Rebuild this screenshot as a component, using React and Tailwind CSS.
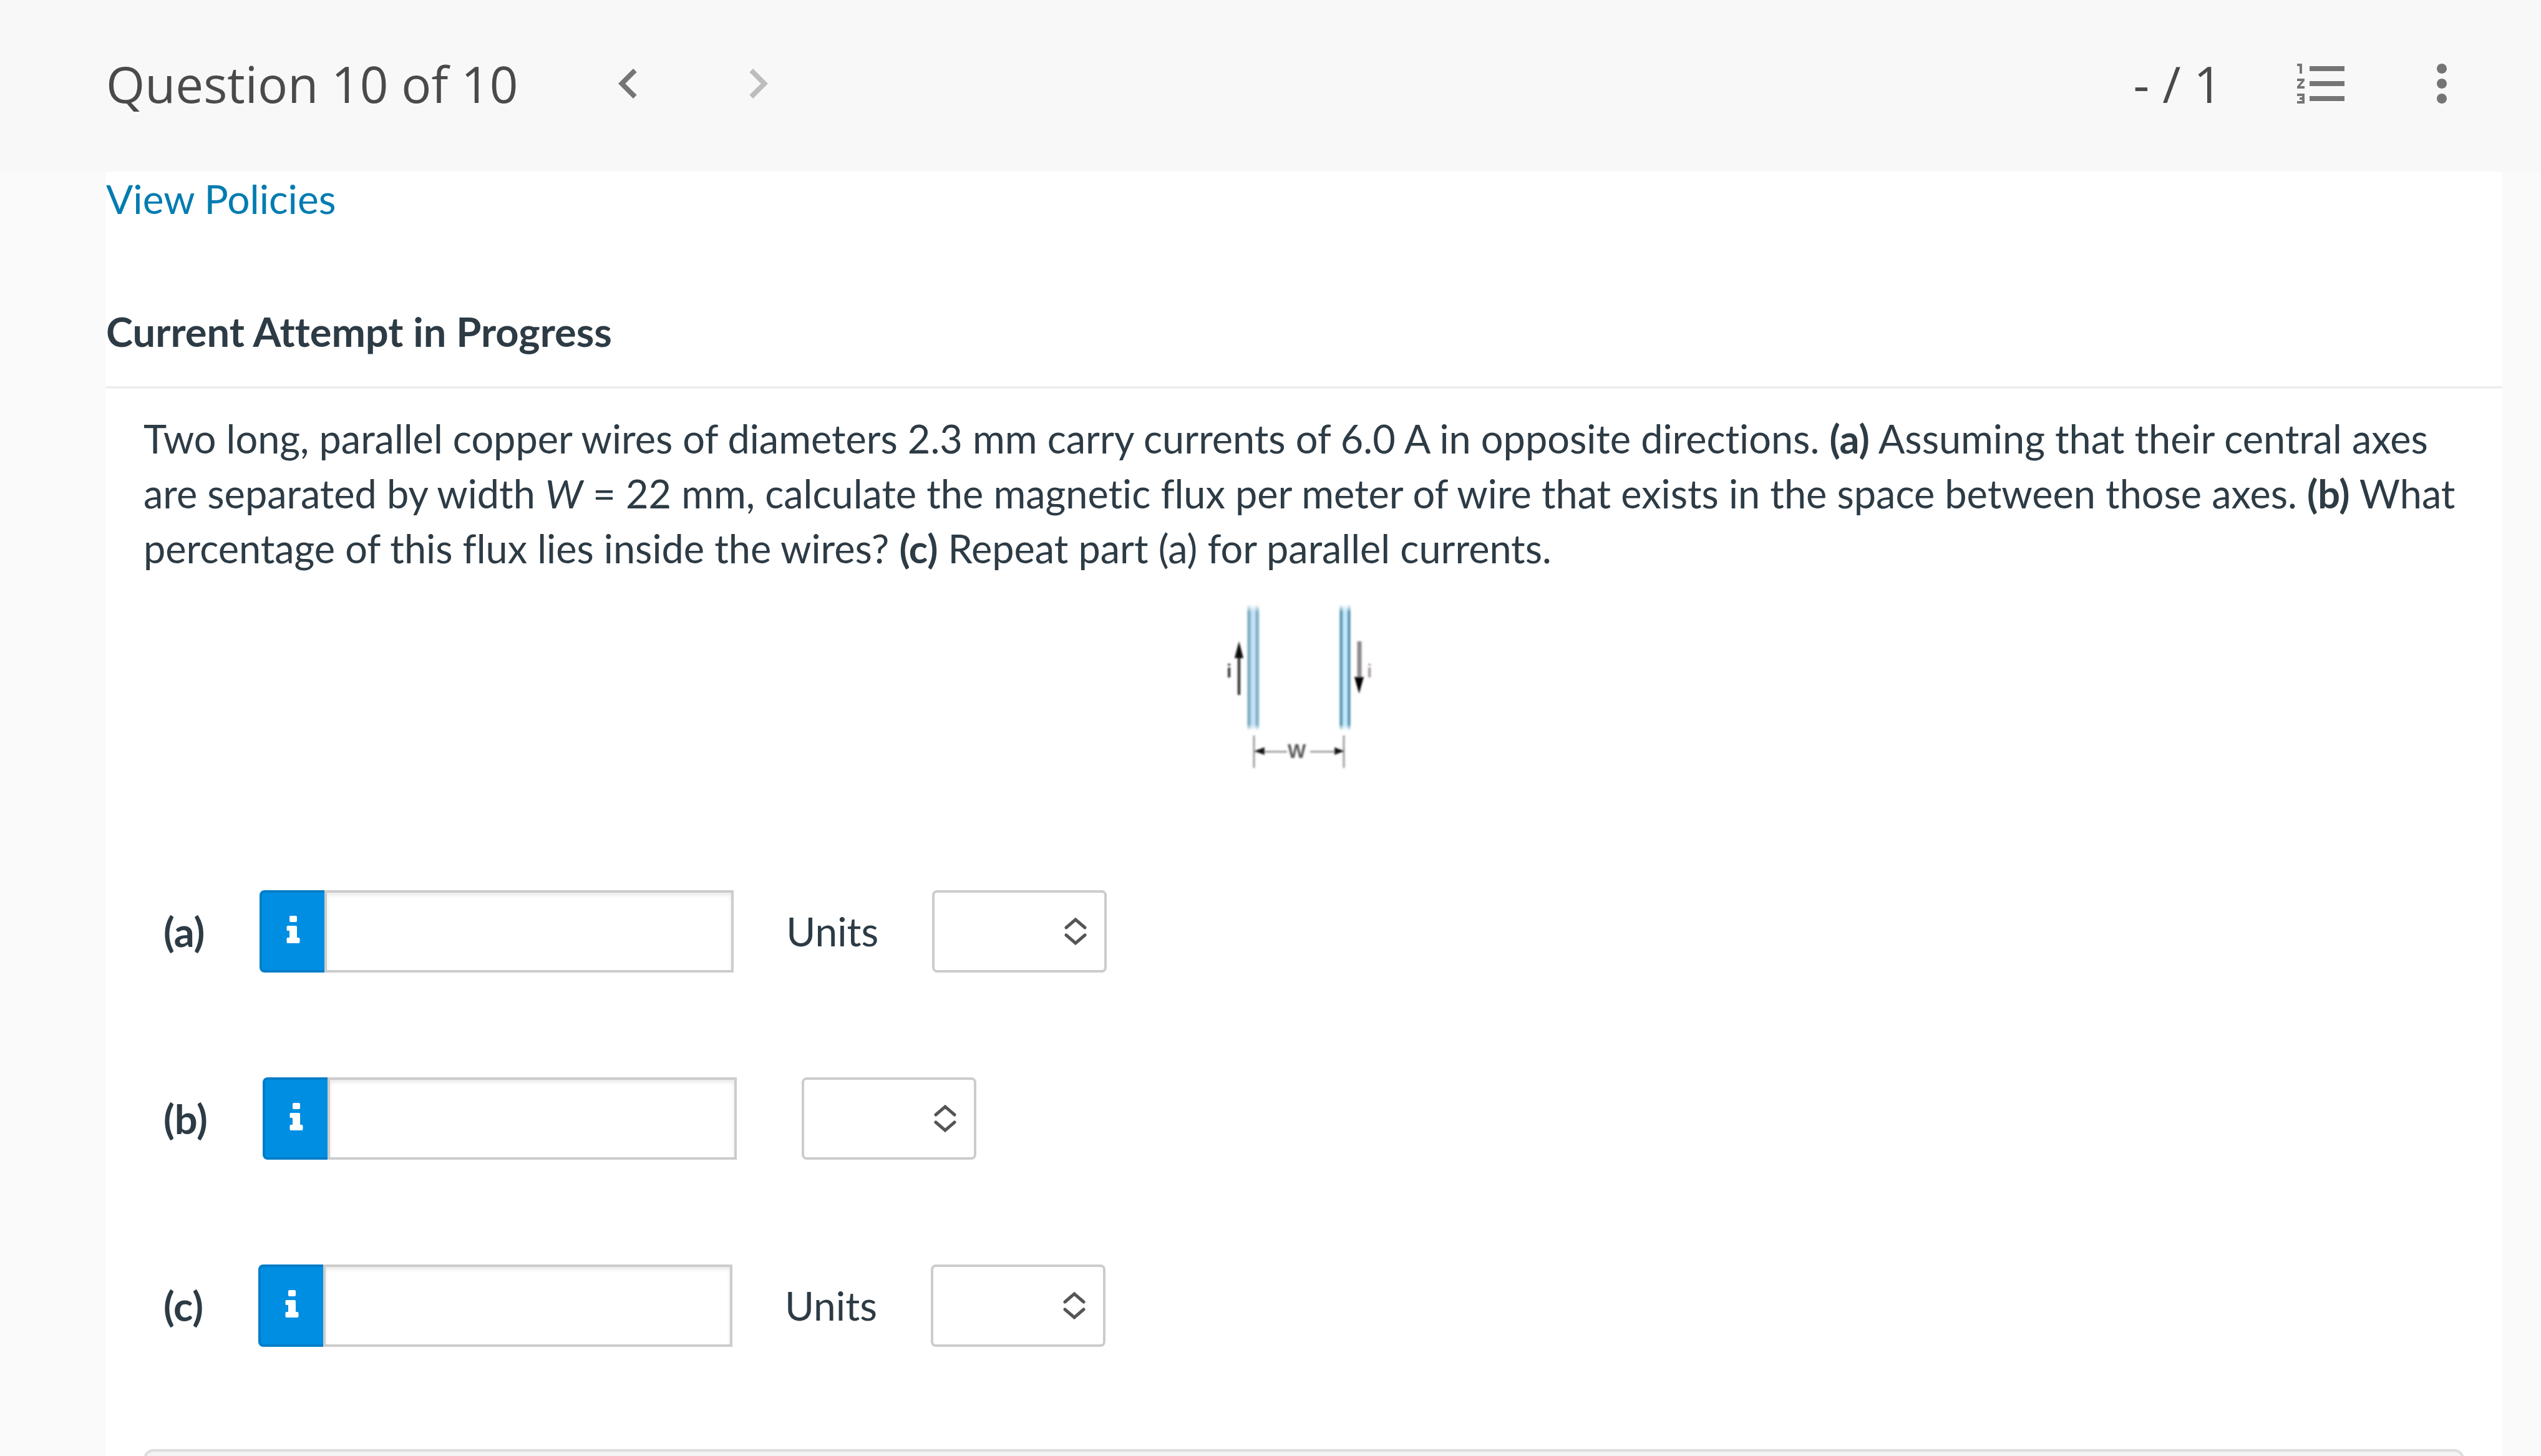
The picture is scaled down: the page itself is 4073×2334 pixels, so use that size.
import { useState } from 'react';
import { MdChevronLeft, MdChevronRight, MdFormatListNumbered, MdMoreVert } from 'react-icons/md';

const parts = [
  { id: 'a', label: '(a)', hasUnitsText: true },
  { id: 'b', label: '(b)', hasUnitsText: false },
  { id: 'c', label: '(c)', hasUnitsText: true },
];

const Header = () => (
  <header className="h-[275px] shrink-0 bg-[#f8f8f8] pl-[170px] pr-[111px] pb-2 flex items-center justify-between font-['Open_Sans',sans-serif] text-[80px] text-[#4a4a4a]">
    <div className="flex items-center">
      <h1 className="whitespace-nowrap">Question 10 of 10</h1>
      <div className="flex items-center gap-28 ml-32">
        <button type="button" aria-label="Previous question" className="text-[#757575]">
          <MdChevronLeft className="size-24" />
        </button>
        <button type="button" aria-label="Next question" disabled className="text-[#bdbdbd]">
          <MdChevronRight className="size-24" />
        </button>
      </div>
    </div>

    <div className="flex items-center">
      <span className="whitespace-nowrap">- / 1</span>
      <div className="flex items-center gap-24 ml-28 text-[#757575]">
        <button type="button" aria-label="Question list">
          <MdFormatListNumbered className="size-24" />
        </button>
        <button type="button" aria-label="More options">
          <MdMoreVert className="size-24" />
        </button>
      </div>
    </div>
  </header>
);

// Two parallel wires with opposite currents, separated by W
const WiresFigure = () => (
  <svg
    viewBox="0 0 380 330"
    className="block mx-auto mt-1 w-[380px] h-[330px]"
    role="img"
    aria-label="Two parallel wires separated by width W"
  >
    <defs>
      <filter id="soft" x="-10%" y="-10%" width="120%" height="120%">
        <feGaussianBlur stdDeviation="1.8" />
      </filter>
      <linearGradient id="wireLeft" x1="0" x2="1" y1="0" y2="0">
        <stop offset="0" stopColor="#a5cfdf" />
        <stop offset="0.15" stopColor="#6d9eb6" />
        <stop offset="0.38" stopColor="#c4e2f6" />
        <stop offset="0.6" stopColor="#c6e2f8" />
        <stop offset="0.8" stopColor="#6d9fb6" />
        <stop offset="1" stopColor="#c4e6f2" />
      </linearGradient>
      <linearGradient id="wireRight" x1="0" x2="1" y1="0" y2="0">
        <stop offset="0" stopColor="#8fc0d2" />
        <stop offset="0.15" stopColor="#4d829c" />
        <stop offset="0.38" stopColor="#bdeaff" />
        <stop offset="0.64" stopColor="#bdeaff" />
        <stop offset="0.86" stopColor="#437a94" />
        <stop offset="1" stopColor="#9cc8d8" />
      </linearGradient>
      <linearGradient id="fade" x1="0" x2="0" y1="0" y2="1">
        <stop offset="0" stopColor="#000" />
        <stop offset="0.06" stopColor="#fff" />
        <stop offset="0.95" stopColor="#fff" />
        <stop offset="1" stopColor="#000" />
      </linearGradient>
      <mask id="wireMask">
        <rect x="90" y="42" width="200" height="202" fill="url(#fade)" />
      </mask>
    </defs>

    <g filter="url(#soft)">
      <g mask="url(#wireMask)">
        <rect x="99" y="42" width="20" height="202" fill="url(#wireLeft)" />
        <rect x="247" y="42" width="18" height="202" fill="url(#wireRight)" />
      </g>

      {/* current arrows */}
      <path d="M86 125V187" stroke="#3a3537" strokeWidth="4.5" />
      <path d="M86 101L93 128H79Z" fill="#0a0808" />
      <path d="M279 101V160" stroke="#8d898a" strokeWidth="7" />
      <path d="M278.500 185L286 158H271Z" fill="#050303" />
      <text x="66" y="159" fontSize="30" fontWeight="700" fill="#3c3838" fontFamily="Liberation Sans, sans-serif">i</text>
      <text x="291" y="159" fontSize="30" fontWeight="700" fill="#a89a9c" fontFamily="Liberation Sans, sans-serif">i</text>

      {/* width marker */}
      <path d="M110 252V304M254 252V304" stroke="#9c9c9c" strokeWidth="3" />
      <path d="M112 278H163M200 278H252" stroke="#8c8c8c" strokeWidth="2.500" />
      <path d="M110 277L127 271V283Z" fill="#141414" />
      <path d="M255 277L239 271V283Z" fill="#141414" />
      <text x="164" y="288" fontSize="31" fontWeight="700" fill="#5a5a5a" fontFamily="Liberation Sans, sans-serif">W</text>
    </g>
  </svg>
);

const AnswerRow = ({ part, value, unit, onValueChange, onUnitChange }) => (
  <div className="flex items-center h-[132px] pl-8">
    <label htmlFor={`answer-${part.id}`} className="font-bold text-[65px]">
      {part.label}
    </label>

    <div className="flex h-full ml-[88px]">
      <button
        type="button"
        aria-label={`Information for part ${part.id}`}
        className="w-[104px] flex items-center justify-center pb-1.5 rounded-l-lg bg-[#008ee2] border-4 border-r-0 border-[#007dc8] text-white"
      >
        <svg viewBox="0 0 22 44" className="w-[22px] h-11" fill="currentColor">
          <rect x="5" y="0" width="12" height="10" rx="2" />
          <path d="M2 16H15Q17 16 17 18V35H19.500Q21.500 35 21.500 37V42Q21.500 44 19.500 44H2Q0.500 44 0.500 42V37Q0.500 35 2 35H5V24H2Q0.500 24 0.500 22V18Q0.500 16 2 16Z" />
        </svg>
      </button>
      <input
        id={`answer-${part.id}`}
        type="text"
        value={value}
        onChange={e => onValueChange(part.id, e.target.value)}
        className="w-[656px] px-6 bg-white border-4 border-[#cccccc] shadow-[inset_0_4px_6px_rgba(0,0,0,0.09)] focus:outline-none"
      />
    </div>

    {part.hasUnitsText && (
      <label htmlFor={`unit-${part.id}`} className="ml-[84px]">
        Units
      </label>
    )}

    <div className={part.hasUnitsText ? 'relative h-full ml-[86px]' : 'relative h-full ml-[104px]'}>
      <select
        id={`unit-${part.id}`}
        aria-label={`Units for part ${part.id}`}
        value={unit}
        onChange={e => onUnitChange(part.id, e.target.value)}
        className="appearance-none w-[280px] h-full pl-6 pr-20 rounded-lg bg-white border-4 border-[#cccccc] focus:outline-none"
      >
        <option value=""></option>
      </select>
      <svg
        viewBox="0 0 36 52"
        className="absolute right-8 top-10 w-9 h-[52px] pointer-events-none"
        fill="none"
        stroke="#555555"
        strokeWidth="5"
        strokeLinecap="round"
      >
        <path d="M3 20L18 7L33 20M3 32L18 45L33 32" />
      </svg>
    </div>
  </div>
);

const App = () => {
  const [values, setValues] = useState({ a: '', b: '', c: '' });
  const [units, setUnits] = useState({ a: '', b: '', c: '' });

  const handleValueChange = (id, value) => {
    setValues(prev => ({ ...prev, [id]: value }));
  };

  const handleUnitChange = (id, value) => {
    setUnits(prev => ({ ...prev, [id]: value }));
  };

  return (
    <div className="h-screen overflow-hidden bg-[#fafafa] font-['Lato',sans-serif] [font-variant-ligatures:none] text-[64px] leading-[88px] text-[#2d3b45]">
      <Header />

      <main className="ml-[170px] mr-[63px] bg-white">
        <a href="#policies" className="block w-fit text-[#007cb0]">
          View Policies
        </a>

        <h2 className="mt-[124px] pb-11 text-[65px] font-bold border-b-4 border-[#eeeeee]">
          Current Attempt in Progress
        </h2>

        <div className="px-[60px] pt-9">
          <p className="text-[63px]">
            Two long, parallel copper wires of diameters 2.3 mm carry currents of 6.0 A in opposite
            directions. <b>(a)</b> Assuming that their central axes are separated by width{' '}
            <i>W</i> = 22 mm, calculate the magnetic flux per meter of wire that exists in the space
            between those axes. <b>(b)</b> What percentage of this flux lies inside the wires?{' '}
            <b>(c)</b> Repeat part (a) for parallel currents.
          </p>

          <WiresFigure />

          <form className="flex flex-col gap-[168px] mt-[170px]" onSubmit={e => e.preventDefault()}>
            {parts.map(part => (
              <AnswerRow
                key={part.id}
                part={part}
                value={values[part.id]}
                unit={units[part.id]}
                onValueChange={handleValueChange}
                onUnitChange={handleUnitChange}
              />
            ))}
          </form>

          <section className="mt-[164px] h-40 rounded-t-2xl border-4 border-[#dddddd] bg-[#f4f4f4]" />
        </div>
      </main>
    </div>
  );
};

export default App;
